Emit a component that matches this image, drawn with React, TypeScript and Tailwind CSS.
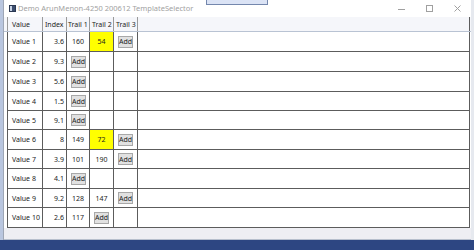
import React from 'react'

type Cell = string | { add: true } | { hi: string } | null

const rows: { name: string; index: string; t1: Cell; t2: Cell; t3: Cell; h: string }[] = [
  { name: 'Value 1', index: '3.6', t1: '160', t2: { hi: '54' }, t3: { add: true }, h: 'h-[20px]' },
  { name: 'Value 2', index: '9.3', t1: { add: true }, t2: null, t3: null, h: 'h-[20px]' },
  { name: 'Value 3', index: '5.6', t1: { add: true }, t2: null, t3: null, h: 'h-[20px]' },
  { name: 'Value 4', index: '1.5', t1: { add: true }, t2: null, t3: null, h: 'h-[19px]' },
  { name: 'Value 5', index: '9.1', t1: { add: true }, t2: null, t3: null, h: 'h-[19px]' },
  { name: 'Value 6', index: '8', t1: '149', t2: { hi: '72' }, t3: { add: true }, h: 'h-[20px]' },
  { name: 'Value 7', index: '3.9', t1: '101', t2: '190', t3: { add: true }, h: 'h-[19px]' },
  { name: 'Value 8', index: '4.1', t1: { add: true }, t2: null, t3: null, h: 'h-[20px]' },
  { name: 'Value 9', index: '9.2', t1: '128', t2: '147', t3: { add: true }, h: 'h-[19px]' },
  { name: 'Value 10', index: '2.6', t1: '117', t2: { add: true }, t3: null, h: 'h-[20px]' },
]

function AddButton() {
  return (
    <div className="w-[15px] h-[12px] border border-[#a8a8a8] bg-[#e1e1e1] flex items-center justify-center text-[7px] leading-none text-[#202020]">
      Add
    </div>
  )
}

function TrailCell({ value, width }: { value: Cell; width: string }) {
  if (value && typeof value === 'object' && 'add' in value) {
    return (
      <div className={`${width} h-full border-r border-[#5c5c5c] flex items-center pl-[4px]`}>
        <AddButton />
      </div>
    )
  }
  if (value && typeof value === 'object' && 'hi' in value) {
    return (
      <div className={`${width} h-full border-r border-[#5c5c5c] flex items-center justify-center bg-[#ffff00]`}>
        {value.hi}
      </div>
    )
  }
  return (
    <div className={`${width} h-full border-r border-[#5c5c5c] flex items-center justify-center`}>
      {value as string}
    </div>
  )
}

export default function App() {
  return (
    <div
      className="w-[474px] h-[250px] flex flex-col overflow-hidden relative bg-white text-[#1c1c1c]"
      style={{ fontFamily: '"Noto Sans", "Open Sans", sans-serif' }}
    >
      <div className="flex flex-1 min-h-0">
        {/* desktop strip on the left */}
        <div className="w-[3px] bg-[#b9c6df]" />

        {/* window */}
        <div className="flex-1 flex flex-col border-l border-[#9ea6b5] bg-white">
          {/* title bar */}
          <div className="h-[17px] flex items-center relative">
            <svg width="7" height="7" viewBox="0 0 7 7" className="ml-[5px]">
              <rect x="0.5" y="0.5" width="6" height="6" fill="#3d4f70" stroke="#2b3852" />
              <rect x="1" y="1" width="2" height="5" fill="#c9d4e6" />
            </svg>
            <span className="ml-[2px] text-[7.5px] text-[#a2a2a2]">
              Demo ArunMenon-4250 200612 TemplateSelector
            </span>
            <div className="ml-auto flex items-center gap-[21px] mr-[10px]">
              <svg width="7" height="7" viewBox="0 0 7 7">
                <line x1="0" y1="4.5" x2="7" y2="4.5" stroke="#a0a0a0" strokeWidth="1" />
              </svg>
              <svg width="7" height="7" viewBox="0 0 7 7">
                <rect x="0.5" y="0.5" width="6" height="6" fill="none" stroke="#a0a0a0" strokeWidth="1" />
              </svg>
              <svg width="7" height="7" viewBox="0 0 7 7">
                <path d="M0.5 0.5 L6.5 6.5 M6.5 0.5 L0.5 6.5" stroke="#a0a0a0" strokeWidth="1" />
              </svg>
            </div>
          </div>

          {/* grid */}
          <div className="flex flex-col text-[7px] leading-none">
            {/* header */}
            <div className="h-[15px] flex bg-[#f5f6fa] border-b border-[#b9c3d3]">
              <div className="w-[3px]" />
              <div className="w-[36px] h-full border-l border-r border-[#9a9a9a] flex items-center pl-[4px]">Value</div>
              <div className="w-[24px] h-full border-r border-[#9a9a9a] flex items-center pl-[2px]">Index</div>
              <div className="w-[23px] h-full border-r border-[#9a9a9a] flex items-center pl-[1px] whitespace-nowrap">Trail 1</div>
              <div className="w-[24px] h-full border-r border-[#9a9a9a] flex items-center pl-[2px] whitespace-nowrap">Trail 2</div>
              <div className="w-[24px] h-full border-r border-[#9a9a9a] flex items-center pl-[2px] whitespace-nowrap">Trail 3</div>
              <div className="flex-1 h-full border-r border-[#5c5c5c]" />
              <div className="w-[1px]" />
            </div>

            {rows.map((r) => (
              <div key={r.name} className={`${r.h} flex`}>
                <div className="w-[3px]" />
                <div className="flex-1 flex border-b border-[#5c5c5c]">
                  <div className="w-[36px] h-full border-l border-r border-[#5c5c5c] flex items-center pl-[4px]">
                    {r.name}
                  </div>
                  <div className="w-[24px] h-full border-r border-[#5c5c5c] flex items-center justify-end pr-[2px]">
                    {r.index}
                  </div>
                  <TrailCell value={r.t1} width="w-[23px]" />
                  <TrailCell value={r.t2} width="w-[24px]" />
                  <TrailCell value={r.t3} width="w-[24px]" />
                  <div className="flex-1 h-full border-r border-[#5c5c5c]" />
                </div>
                <div className="w-[1px]" />
              </div>
            ))}
          </div>

          {/* empty band under the grid */}
          <div className="flex-1 bg-[#eeeef3] border-b border-[#b7bfcd]" />
        </div>

        {/* desktop strip on the right */}
        <div className="w-[3px] bg-[#e6e9ef]" />
      </div>

      {/* taskbar */}
      <div className="h-[10px] bg-[#2d4682]" />

      {/* window behind, peeking over the title bar */}
      <div className="absolute left-[206px] top-[-1px] w-[62px] h-[6px] bg-[#dbe3f5] border border-[#7487ad]" />
    </div>
  )
}
